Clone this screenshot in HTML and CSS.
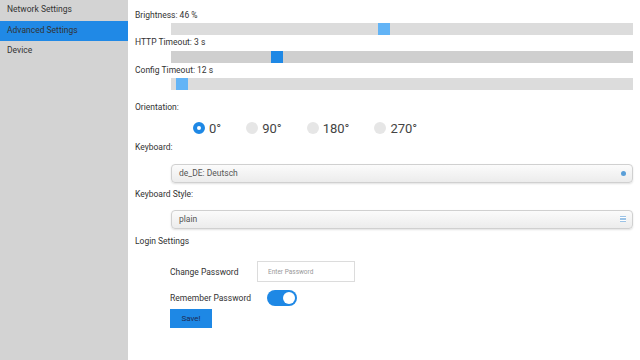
FILE: index.html
```html
<!DOCTYPE html>
<html lang="en">
<head>
    <meta charset="UTF-8">
    <meta name="viewport" content="width=device-width, initial-scale=1.0">
    <title>Advanced Settings</title>
    <link rel="stylesheet" href="styles.css">
</head>
<body>
    <div class="sidebar">
        <div class="nav-item">Network Settings</div>
        <div class="nav-item active">Advanced Settings</div>
        <div class="nav-item">Device</div>
    </div>

    <div class="main">
        <div class="field-label first">Brightness: 46 %</div>
        <div class="slider"><span class="thumb" style="--pos: 0.46"></span></div>

        <div class="field-label">HTTP Timeout: 3 s</div>
        <div class="slider focused"><span class="thumb" style="--pos: 0.222"></span></div>

        <div class="field-label">Config Timeout: 12 s</div>
        <div class="slider"><span class="thumb" style="--pos: 0.011"></span></div>

        <div class="field-label section">Orientation:</div>
        <div class="radios">
            <label class="radio checked"><span class="dot"></span>0°</label>
            <label class="radio"><span class="dot"></span>90°</label>
            <label class="radio"><span class="dot"></span>180°</label>
            <label class="radio"><span class="dot"></span>270°</label>
        </div>

        <div class="field-label">Keyboard:</div>
        <div class="select">
            <span>de_DE: Deutsch</span>
            <span class="sel-icon round"></span>
        </div>

        <div class="field-label after-select">Keyboard Style:</div>
        <div class="select">
            <span>plain</span>
            <span class="sel-icon lines"></span>
        </div>

        <div class="field-label login">Login Settings</div>
        <div class="login-row pw-row">
            <span class="login-label">Change Password</span>
            <input class="pw-input" type="password" placeholder="Enter Password">
        </div>
        <div class="login-row remember-row">
            <span class="login-label">Remember Password</span>
            <span class="toggle"><span class="knob"></span></span>
        </div>
        <button class="save">Save!</button>
    </div>
</body>
</html>
```

FILE: styles.css
```css
body {
    margin: 0;
    padding: 0;
    font-family: Roboto, "Liberation Sans", sans-serif;
    color: #333;
    background: #fff;
    display: flex;
    height: 360px;
    overflow: hidden;
}
.sidebar {
    width: 128px;
    flex-shrink: 0;
    background: #d3d3d3;
}
.nav-item {
    height: 20.5px;
    line-height: 19px;
    padding-left: 7px;
    font-size: 8.5px;
    color: #333;
}
.nav-item.active {
    background: #2089e6;
}
.main {
    flex: 1;
    padding: 0 7px 0 7px;
}
.field-label {
    font-size: 8.5px;
    line-height: 15.5px;
    color: #333;
}
.field-label.first {
    margin-top: 7.8px;
}
.slider {
    position: relative;
    height: 12px;
    margin-left: 36px;
    background: #dcdcdc;
}
.slider.focused {
    background: #cfcfcf;
}
.thumb {
    position: absolute;
    top: 0;
    left: calc((100% - 12px) * var(--pos));
    width: 12px;
    height: 12px;
    background: #63b4f6;
}
.slider.focused .thumb {
    background: #1e88e5;
}
.field-label.section {
    margin-top: 9px;
    line-height: 16px;
}
.radios {
    display: flex;
    align-items: center;
    height: 24px;
    margin-top: 1px;
    padding-left: 58px;
    gap: 25px;
}
.radio {
    display: flex;
    align-items: center;
    gap: 4px;
    font-size: 13px;
    color: #444;
}
.dot {
    width: 12px;
    height: 12px;
    border-radius: 50%;
    background: #e6e6e6;
    box-sizing: border-box;
}
.radio.checked .dot {
    border: 4px solid #1e88e5;
    background: #fff;
}
.select {
    display: flex;
    align-items: center;
    justify-content: space-between;
    height: 17px;
    margin-left: 36px;
    margin-top: 8px;
    padding: 0 6px 0 7px;
    border: 1px solid #d0d0d0;
    border-radius: 4px;
    background: linear-gradient(#fbfbfb, #ececec);
    box-shadow: 0 1px 2px rgba(0,0,0,0.12);
    font-size: 8.5px;
    color: #555;
}
.sel-icon.round {
    width: 5px;
    height: 5px;
    border-radius: 50%;
    background: #5a9fd8;
}
.sel-icon.lines {
    width: 6px;
    height: 4px;
    border-top: 1px solid #9cc3e6;
    border-bottom: 1px solid #9cc3e6;
    background: linear-gradient(#fff 0 30%, #9cc3e6 30% 70%, #fff 70%);
}
.field-label.after-select {
    margin-top: 3px;
    line-height: 16px;
}
.field-label.login {
    margin-top: 4px;
    line-height: 16px;
}
.login-row {
    display: flex;
    align-items: center;
    padding-left: 35px;
}
.login-label {
    width: 87px;
    font-size: 8.5px;
    color: #333;
}
.pw-row {
    margin-top: 13px;
    height: 20px;
}
.pw-input {
    width: 98px;
    height: 21px;
    box-sizing: border-box;
    border: 1px solid #dcdcdc;
    padding: 0 10px;
    font-family: Roboto, sans-serif;
    font-size: 6.5px;
    outline: none;
}
.pw-input::placeholder {
    color: #999;
}
.remember-row {
    margin-top: 8px;
    height: 16px;
}
.remember-row .login-label {
    width: 97px;
}
.toggle {
    display: flex;
    align-items: center;
    justify-content: flex-end;
    width: 30px;
    height: 16px;
    box-sizing: border-box;
    padding: 2px;
    border-radius: 8px;
    background: #1e88e5;
}
.knob {
    width: 12px;
    height: 12px;
    border-radius: 50%;
    background: #fff;
}
.save {
    display: block;
    margin: 3px 0 0 35px;
    width: 42px;
    height: 19px;
    border: none;
    padding: 0;
    background: #1e88e5;
    color: #1b2b55;
    font-family: Roboto, sans-serif;
    font-size: 8px;
    cursor: pointer;
}
```
